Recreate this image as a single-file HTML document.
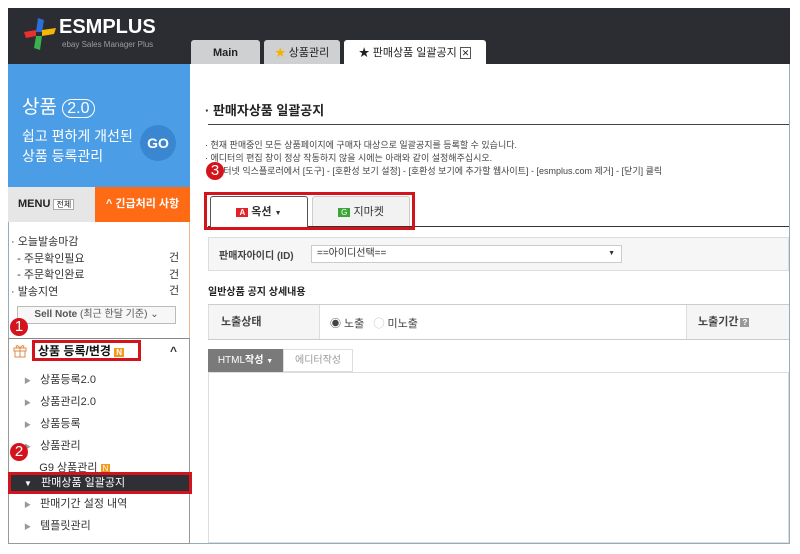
<!DOCTYPE html>
<html><head><meta charset="utf-8"><style>
*{margin:0;padding:0;box-sizing:border-box}
body{width:800px;height:554px;background:#fff;position:relative;overflow:hidden;font-family:"Liberation Sans","Noto Sans CJK KR",sans-serif;color:#333}
.a{position:absolute}
.t{font-size:11px;white-space:nowrap}
.red{position:absolute;border:3px solid #d4141c}
.num{position:absolute;width:18px;height:18px;border-radius:50%;background:#d4141c;color:#fff;font-size:15px;line-height:18px;text-align:center}
.tri{color:#999;font-size:7px}
</style></head><body>
<div class="a" style="left:8px;top:8px;width:782px;height:536px;border:1px solid #9ab;"></div>
<!-- header -->
<div class="a" style="left:8px;top:8px;width:782px;height:56px;background:#2b2d33"></div>
<svg class="a" style="left:22px;top:16px" width="36" height="36" viewBox="0 0 36 36">
<path d="M16 2 L22 4 L20 16 L14 16Z" fill="#2d6fd6"/><path d="M2 16 L14 14 L14 20 L4 22Z" fill="#e8302c"/>
<path d="M20 14 L34 12 L32 18 L20 20Z" fill="#f5b800"/><path d="M14 20 L20 20 L18 34 L12 32Z" fill="#3cb04a"/></svg>
<div class="a" style="left:59px;top:16px;color:#fff;font-size:20px;font-weight:bold;">ESMPLUS</div>
<div class="a" style="left:62px;top:40px;color:#9a9ca2;font-size:8px">ebay Sales Manager Plus</div>
<div class="a" style="left:191px;top:40px;width:69px;height:24px;background:#cfd0d2;border-radius:3px 3px 0 0;font-size:11px;font-weight:bold;text-align:center;line-height:26px;color:#222">Main</div>
<div class="a" style="left:264px;top:40px;width:76px;height:24px;background:#cfd0d2;border-radius:3px 3px 0 0;font-size:11px;text-align:center;line-height:26px;color:#222"><span style="color:#f2b200">★</span> 상품관리</div>
<div class="a" style="left:344px;top:40px;width:142px;height:24px;background:#fff;border-radius:3px 3px 0 0;font-size:11px;text-align:center;line-height:26px;color:#222">★ 판매상품 일괄공지 <span style="font-size:9px;border:1px solid #555;padding:0 1px">✕</span></div>
<!-- blue -->
<div class="a" style="left:8px;top:64px;width:182px;height:123px;background:#4b9ee6"></div>
<div class="a" style="left:22px;top:92px;color:#fff;font-size:19px">상품 <span style="border:1.5px solid #fff;border-radius:11px;padding:0 4px;font-size:16px">2.0</span></div>
<div class="a" style="left:22px;top:126px;color:#fff;font-size:14px;line-height:20px">쉽고 편하게 개선된<br>상품 등록관리</div>
<div class="a" style="left:140px;top:125px;width:36px;height:36px;border-radius:50%;background:#3a86d0;color:#fff;font-weight:bold;font-size:14px;text-align:center;line-height:36px">GO</div>
<!-- menu -->
<div class="a" style="left:8px;top:187px;width:87px;height:35px;background:#e6e6e6"></div>
<div class="a" style="left:18px;top:198px;font-size:11px;font-weight:bold;color:#222">MENU <span style="font-weight:normal;font-size:8px;border:1px solid #aaa;background:#fff;padding:0 2px">전체</span></div>
<div class="a" style="left:95px;top:187px;width:95px;height:35px;background:#ff6a14;color:#fff;font-size:11px;font-weight:bold;text-align:center;line-height:35px">^ 긴급처리 사항</div>
<div class="a" style="left:8px;top:222px;width:182px;height:116px;border-right:1px solid #f0b48c"></div>
<div class="a t" style="left:11px;top:234px;line-height:16.5px">· 오늘발송마감<br>&nbsp; - 주문확인필요<br>&nbsp; - 주문확인완료<br>· 발송지연</div>
<div class="a t" style="left:169px;top:250px;line-height:16.5px">건<br>건<br>건</div>
<div class="a" style="left:17px;top:306px;width:159px;height:18px;border:1px solid #bbb;background:#f7f7f7;font-size:10px;text-align:center;line-height:16px;color:#555"><b>Sell Note</b> (최근 한달 기준) ⌄</div>
<!-- sidebar list -->
<div class="a" style="left:8px;top:338px;width:182px;height:206px;border:1px solid #999;border-top:1px solid #888"></div>
<svg class="a" style="left:13px;top:343px" width="14" height="15" viewBox="0 0 14 15"><rect x="1" y="5" width="12" height="3" fill="none" stroke="#e08a4a"/><rect x="2" y="8" width="10" height="6" fill="none" stroke="#e08a4a"/><line x1="7" y1="5" x2="7" y2="14" stroke="#e08a4a"/><path d="M7 5 C4 1 2 3 4 5 M7 5 C10 1 12 3 10 5" fill="none" stroke="#e08a4a"/></svg>
<div class="a" style="left:38px;top:343px;font-size:12px;font-weight:bold;color:#111;line-height:16px">상품 등록/변경 <span style="background:#f39a1e;color:#fff;font-size:8px;padding:0 2px">N</span></div>
<div class="a" style="left:170px;top:344px;font-size:12px;font-weight:bold">^</div>
<div class="red" style="left:32px;top:340px;width:109px;height:21px"></div>
<div class="num" style="left:10px;top:318px">1</div>
<div class="a t" style="left:24px;top:370px;line-height:21px;font-size:11px"><span class="tri">▶</span>&nbsp;&nbsp; 상품등록2.0<br><span class="tri">▶</span>&nbsp;&nbsp; 상품관리2.0<br><span class="tri">▶</span>&nbsp;&nbsp; 상품등록<br><span class="tri">▶</span>&nbsp;&nbsp; 상품관리<br>&nbsp;&nbsp;&nbsp;&nbsp; G9 상품관리 <span style="background:#f39a1e;color:#fff;font-size:8px;padding:0 2px">N</span></div>
<div class="num" style="left:10px;top:443px">2</div>
<div class="a" style="left:11px;top:474px;width:178px;height:18px;background:#2e3036;color:#fff;font-size:11px;line-height:18px;padding-left:13px"><span style="font-size:8px">▼</span>&nbsp;&nbsp; 판매상품 일괄공지</div>
<div class="red" style="left:8px;top:472px;width:184px;height:22px"></div>
<div class="a t" style="left:24px;top:494px;line-height:21px"><span class="tri">▶</span>&nbsp;&nbsp; 판매기간 설정 내역<br><span class="tri">▶</span>&nbsp;&nbsp; 템플릿관리</div>
<!-- content -->
<div class="a" style="left:205px;top:100px;font-size:13px;font-weight:bold;color:#222">· 판매자상품 일괄공지</div>
<div class="a" style="left:208px;top:124px;width:581px;height:1px;background:#444"></div>
<div class="a" style="left:205px;top:139px;font-size:9px;line-height:13px;color:#444;white-space:nowrap">· 현재 판매중인 모든 상품페이지에 구매자 대상으로 일괄공지를 등록할 수 있습니다.<br>· 에디터의 편집 창이 정상 작동하지 않을 시에는 아래와 같이 설정해주십시오.<br>&nbsp;&nbsp;&nbsp; 인터넷 익스플로러에서 [도구] - [호환성 보기 설정] - [호환성 보기에 추가할 웹사이트] - [esmplus.com 제거] - [닫기] 클릭</div>
<div class="num" style="left:206px;top:162px">3</div>
<div class="a" style="left:208px;top:226px;width:581px;height:1px;background:#333"></div>
<div class="a" style="left:210px;top:196px;width:98px;height:31px;background:#fff;border:1px solid #555;border-bottom:none;border-radius:3px 3px 0 0;font-size:11px;font-weight:bold;text-align:center;line-height:30px"><span style="background:#e32228;color:#fff;font-size:8px;padding:0 3px">A</span> 옥션 <span style="font-size:7px">▼</span></div>
<div class="a" style="left:312px;top:196px;width:98px;height:30px;background:#f2f2f2;border:1px solid #ccc;border-bottom:none;border-radius:3px 3px 0 0;font-size:11px;text-align:center;line-height:30px"><span style="background:#3ca536;color:#fff;font-size:8px;padding:0 3px">G</span> 지마켓</div>
<div class="red" style="left:204px;top:192px;width:211px;height:38px"></div>
<div class="a" style="left:208px;top:237px;width:581px;height:34px;background:#f6f6f6;border:1px solid #ddd"></div>
<div class="a" style="left:219px;top:247px;font-size:10px;font-weight:bold;color:#444">판매자아이디 (ID)</div>
<div class="a" style="left:311px;top:245px;width:311px;height:18px;background:#fff;border:1px solid #ccc;font-size:10px;line-height:16px;padding-left:5px">==아이디선택==<span style="position:absolute;right:6px;font-size:7px">▼</span></div>
<div class="a" style="left:208px;top:283px;font-size:10px;font-weight:bold;color:#222">일반상품 공지 상세내용</div>
<div class="a" style="left:208px;top:304px;width:581px;height:36px;border-top:1px solid #ccc;border-bottom:1px solid #ccc"></div>
<div class="a" style="left:208px;top:305px;width:112px;height:34px;background:#f5f5f5;border-left:1px solid #ddd;border-right:1px solid #ddd;font-size:11px;line-height:34px;padding-left:12px;font-weight:bold;color:#444">노출상태</div>
<div class="a" style="left:330px;top:315px;font-size:11px;color:#444">◉ 노출 &nbsp; <span style="color:#bbb">◯</span> 미노출</div>
<div class="a" style="left:686px;top:305px;width:103px;height:34px;background:#f5f5f5;border-left:1px solid #ddd;font-size:11px;line-height:34px;padding-left:11px;font-weight:bold;color:#444">노출기간<span style="background:#999;color:#fff;font-size:8px;padding:0 2px;margin-left:2px">?</span></div>
<div class="a" style="left:208px;top:349px;width:75px;height:23px;background:#7a7a7a;color:#fff;font-size:10px;text-align:center;line-height:23px">HTML<b>작성</b> <span style="font-size:7px">▼</span></div>
<div class="a" style="left:283px;top:349px;width:70px;height:23px;border:1px solid #ddd;color:#999;font-size:10px;text-align:center;line-height:21px">에디터작성</div>
<div class="a" style="left:208px;top:372px;width:581px;height:171px;border:1px solid #ddd"></div>
</body></html>
